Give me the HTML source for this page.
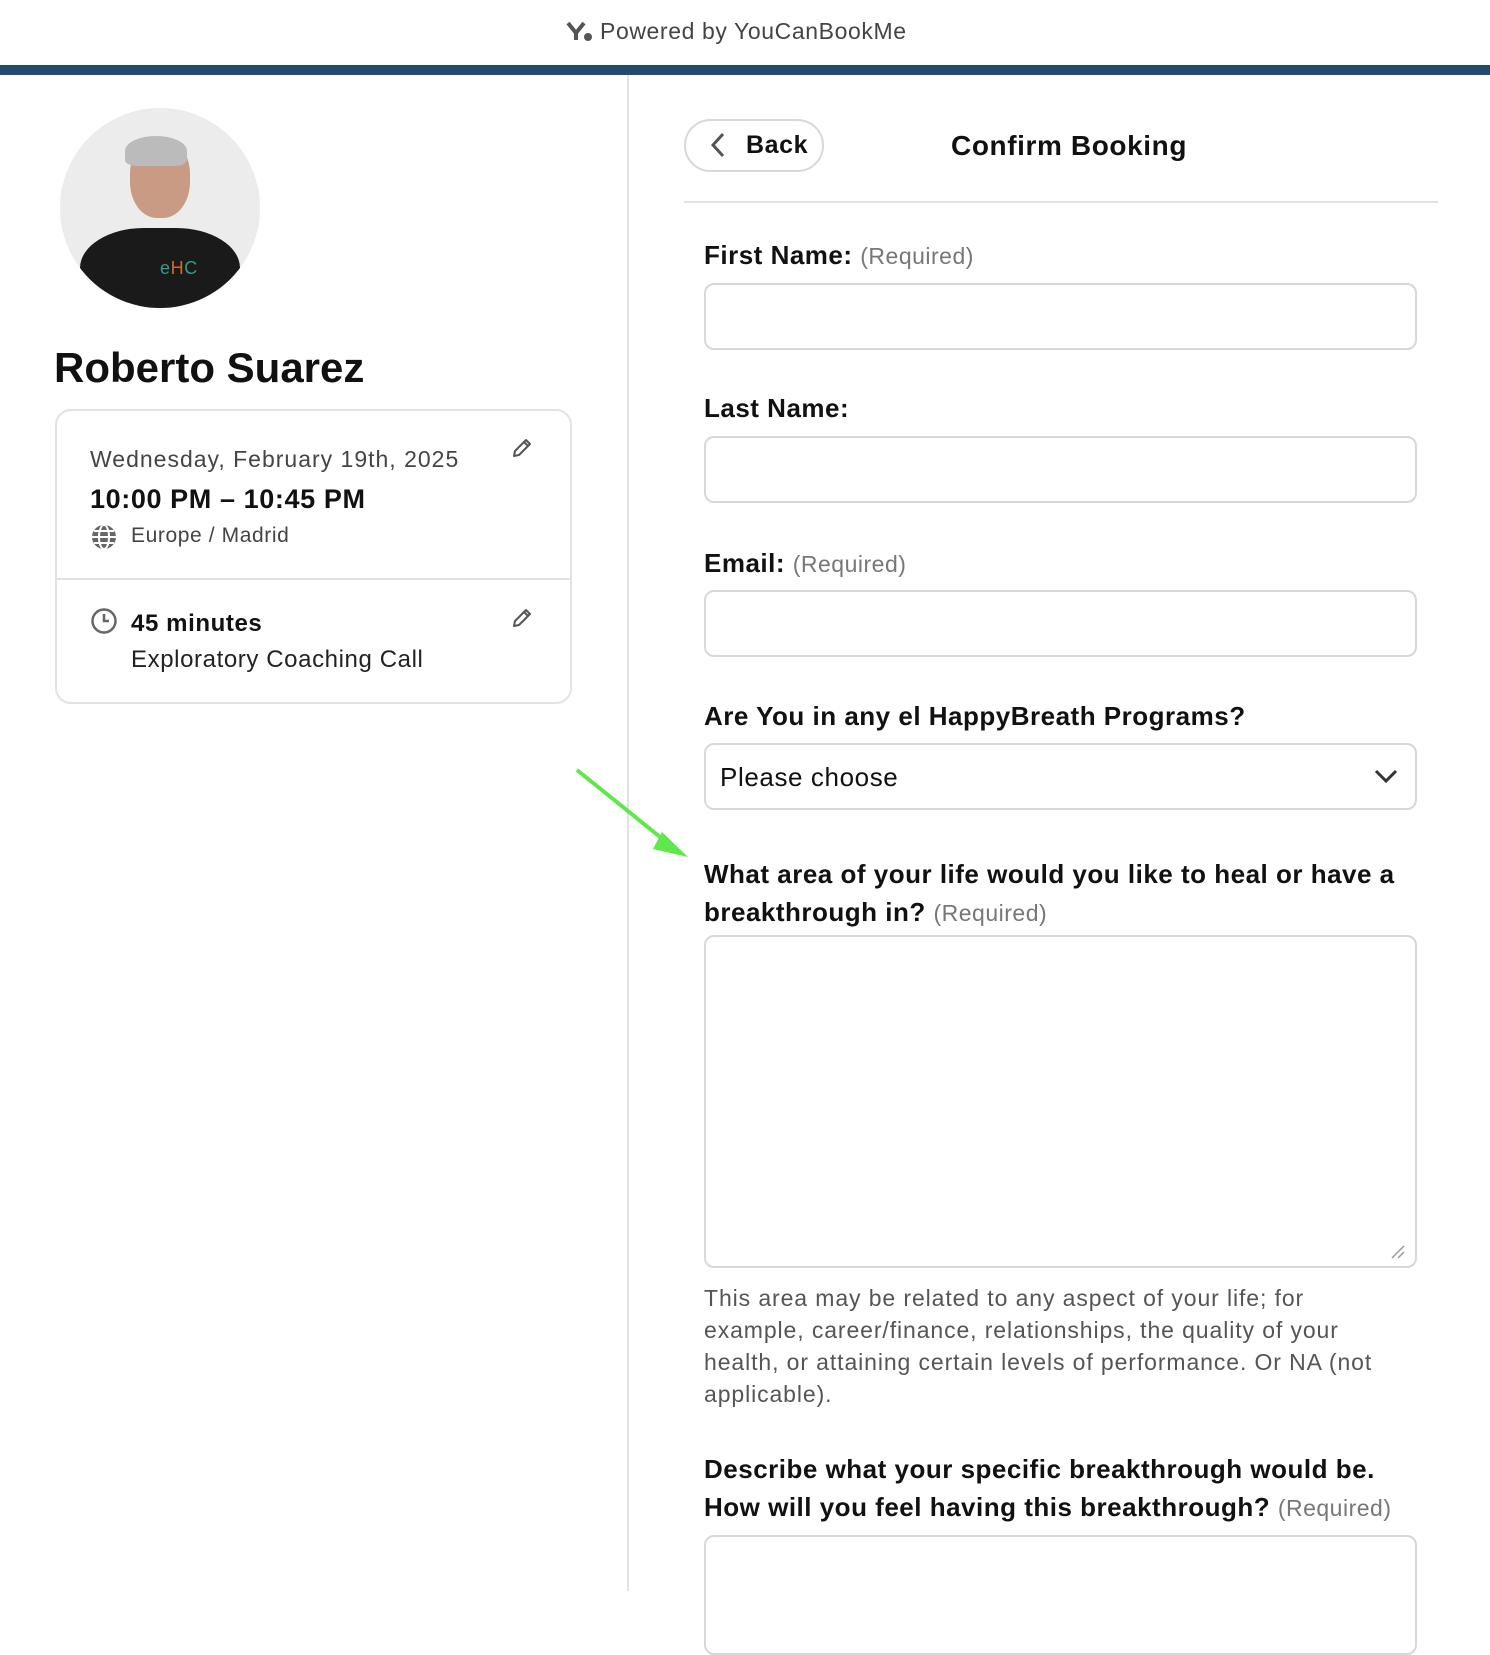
<!DOCTYPE html>
<html><head><meta charset="utf-8"><style>
*{margin:0;padding:0;box-sizing:border-box}
body{width:1490px;height:1591px;overflow:hidden;background:#fff;font-family:"Liberation Sans",Arial,sans-serif;color:#111;position:relative;letter-spacing:0.6px}
.a{position:absolute;white-space:nowrap}
.lab{position:absolute;left:704px;font-size:26px;font-weight:bold;color:#111;letter-spacing:0.5px}
.req{font-weight:normal;color:#777;font-size:23px}
.inp{position:absolute;left:704px;width:713px;height:67px;border:2px solid #d8d8d8;border-radius:10px;background:#fff}
</style></head><body>
<div class="a" style="left:566px;top:18px;font-size:23px;color:#444;">
<svg width="28" height="22" viewBox="0 0 28 22" style="vertical-align:-3px;margin-right:6px"><path d="M2 3 L10 13 L10 20 M18 3 L10 13" stroke="#555" stroke-width="4" fill="none"/><circle cx="22" cy="17" r="4" fill="#555"/></svg>Powered by YouCanBookMe</div>
<div class="a" style="left:0;top:65px;width:1490px;height:10px;background:#234a6f"></div>
<div class="a" style="left:627px;top:75px;width:2px;height:1516px;background:#e2e2e2"></div>

<div class="a" style="left:60px;top:108px;width:200px;height:200px;border-radius:50%;background:#ececec;overflow:hidden">
<div class="a" style="left:70px;top:30px;width:60px;height:80px;border-radius:45%;background:#c99a84"></div>
<div class="a" style="left:65px;top:28px;width:62px;height:30px;border-radius:50% 50% 20% 20%;background:#bbb"></div>
<div class="a" style="left:20px;top:120px;width:160px;height:100px;border-radius:40% 40% 0 0;background:#1a1a1a"></div>
<div class="a" style="left:100px;top:150px;font-size:18px;color:#3a9a8a">e<span style="color:#d26b2a">H</span>C</div>
</div>
<div class="a" style="left:54px;top:344px;font-size:42px;font-weight:bold;color:#111;letter-spacing:0">Roberto Suarez</div>

<div class="a" style="left:55px;top:409px;width:517px;height:295px;border:2px solid #e2e2e2;border-radius:16px"></div>
<div class="a" style="left:56px;top:578px;width:515px;height:2px;background:#e2e2e2"></div>
<div class="a" style="left:90px;top:446px;font-size:23px;color:#444;letter-spacing:1px">Wednesday, February 19th, 2025</div>
<div class="a" style="left:90px;top:484px;font-size:27px;font-weight:bold">10:00 PM – 10:45 PM</div>
<svg class="a" style="left:90px;top:523px" width="28" height="28" viewBox="0 0 28 28"><circle cx="14" cy="14" r="12" fill="#666"/><g stroke="#fff" stroke-width="2" fill="none"><path d="M2 14H26M4 8H24M4 20H24"/><ellipse cx="14" cy="14" rx="5" ry="12"/></g></svg>
<div class="a" style="left:131px;top:524px;font-size:21px;color:#444">Europe / Madrid</div>
<svg class="a" style="left:510px;top:436px" width="24" height="24" viewBox="0 0 24 24"><path d="M4 20 L5 15 L16 4 L20 8 L9 19 Z M14 6 L18 10" stroke="#555" stroke-width="2" fill="none" stroke-linejoin="round"/></svg>
<svg class="a" style="left:510px;top:606px" width="24" height="24" viewBox="0 0 24 24"><path d="M4 20 L5 15 L16 4 L20 8 L9 19 Z M14 6 L18 10" stroke="#555" stroke-width="2" fill="none" stroke-linejoin="round"/></svg>
<svg class="a" style="left:90px;top:607px" width="28" height="28" viewBox="0 0 28 28"><circle cx="14" cy="14" r="11.5" stroke="#666" stroke-width="2.5" fill="none"/><path d="M14 7V14H19" stroke="#666" stroke-width="2.5" fill="none"/></svg>
<div class="a" style="left:131px;top:610px;font-size:24px;font-weight:bold">45 minutes</div>
<div class="a" style="left:131px;top:646px;font-size:24px;color:#222">Exploratory Coaching Call</div>

<div class="a" style="left:684px;top:119px;width:140px;height:53px;border:2px solid #d6d9d6;border-radius:27px"></div>
<svg class="a" style="left:710px;top:132px" width="16" height="26" viewBox="0 0 16 26"><path d="M13 2 L3 13 L13 24" stroke="#555" stroke-width="3" fill="none"/></svg>
<div class="a" style="left:746px;top:131px;font-size:25px;font-weight:bold">Back</div>
<div class="a" style="left:951px;top:130px;font-size:28px;font-weight:bold">Confirm Booking</div>
<div class="a" style="left:684px;top:201px;width:754px;height:2px;background:#e2e2e2"></div>

<div class="lab" style="top:240px">First Name: <span class="req">(Required)</span></div>
<div class="inp" style="top:283px"></div>
<div class="lab" style="top:393px">Last Name:</div>
<div class="inp" style="top:436px"></div>
<div class="lab" style="top:548px">Email: <span class="req">(Required)</span></div>
<div class="inp" style="top:590px"></div>
<div class="lab" style="top:701px">Are You in any el HappyBreath Programs?</div>
<div class="inp" style="top:743px"></div>
<div class="a" style="left:720px;top:762px;font-size:26px;color:#111">Please choose</div>
<svg class="a" style="left:1374px;top:768px" width="24" height="16" viewBox="0 0 24 16"><path d="M2 3 L12 13 L22 3" stroke="#333" stroke-width="3" fill="none"/></svg>

<svg class="a" style="left:570px;top:762px" width="130" height="100" viewBox="0 0 130 100"><path d="M7 8 L100 83" stroke="#5ee84a" stroke-width="4"/><path d="M118 95 L92 70 L83 87 Z" fill="#5ee84a"/></svg>

<div class="lab" style="top:855px;line-height:38px;white-space:normal;width:720px">What area of your life would you like to heal or have a breakthrough in? <span class="req">(Required)</span></div>
<div class="inp" style="top:935px;height:333px"></div>
<svg class="a" style="left:1390px;top:1244px" width="16" height="16" viewBox="0 0 16 16"><path d="M2 14 L14 2 M8 14 L14 8" stroke="#999" stroke-width="1.5"/></svg>
<div class="a" style="left:704px;top:1282px;width:690px;white-space:normal;font-size:23px;line-height:32px;color:#555;letter-spacing:0.9px">This area may be related to any aspect of your life; for example, career/finance, relationships, the quality of your health, or attaining certain levels of performance. Or NA (not applicable).</div>
<div class="lab" style="top:1450px;line-height:38px;white-space:normal;width:700px">Describe what your specific breakthrough would be. How will you feel having this breakthrough? <span class="req">(Required)</span></div>
<div class="inp" style="top:1535px;height:120px"></div>
</body></html>
